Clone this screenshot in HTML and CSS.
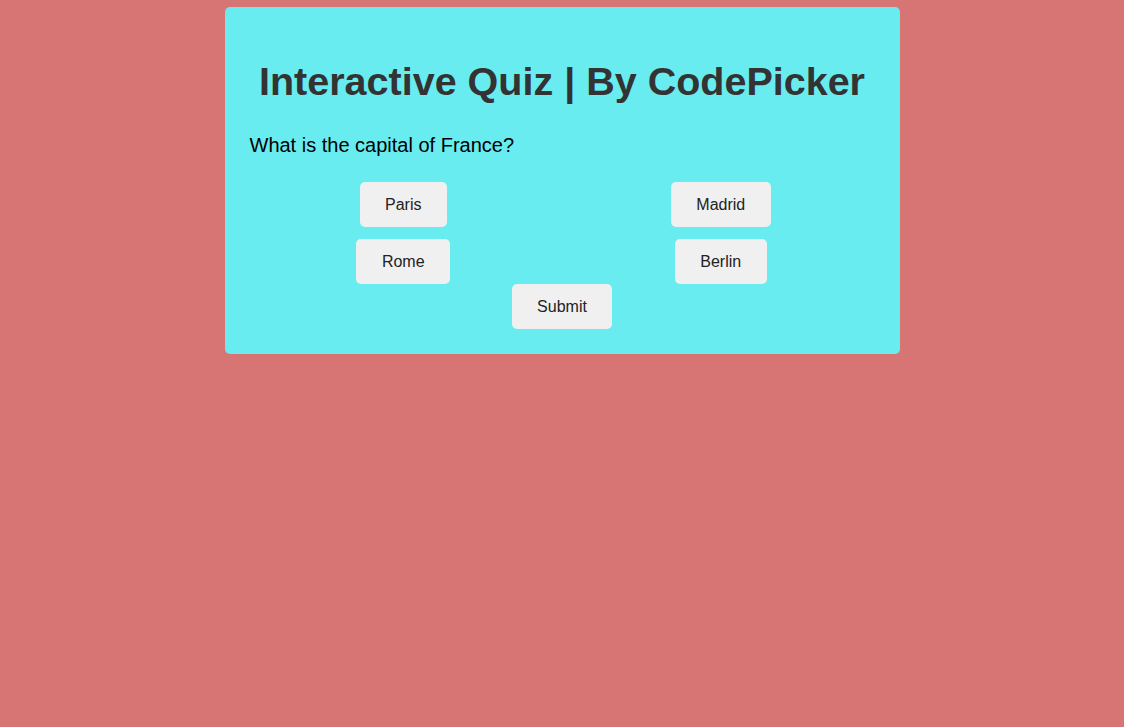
FILE: index.html
```html
<!DOCTYPE html>
<html lang="en">
<head>
<meta charset="utf-8">
<title>Interactive Quiz | By CodePicker</title>
<link rel="stylesheet" href="styles.css">
</head>
<body>
  <div class="quiz">
    <h1 class="title">Interactive Quiz | By CodePicker</h1>
    <p class="question">What is the capital of France?</p>
    <div class="options">
      <button class="btn">Paris</button>
      <button class="btn">Madrid</button>
      <button class="btn">Rome</button>
      <button class="btn">Berlin</button>
    </div>
    <div class="actions">
      <button class="btn">Submit</button>
    </div>
  </div>
</body>
</html>
```

FILE: styles.css
```css
html, body {
  margin: 0;
  padding: 0;
}
body {
  background: #d77575;
  font-family: "Liberation Sans", Arial, sans-serif;
  min-height: 727px;
}
.quiz {
  width: 675px;
  margin: 7px auto 0;
  background: #68ecf0;
  border-radius: 5px;
  padding: 25px;
  box-sizing: border-box;
}
.title {
  font-size: 39.5px;
  font-weight: bold;
  color: #333333;
  text-align: center;
  margin: 27px 0 30px;
}
.question {
  font-size: 20px;
  color: #000;
  margin: 0;
}
.options {
  display: grid;
  grid-template-columns: 1fr 1fr;
  column-gap: 10px;
  row-gap: 12px;
  justify-items: center;
  margin-top: 25px;
}
.actions {
  display: flex;
  justify-content: center;
}
.btn {
  font-family: "Liberation Sans", Arial, sans-serif;
  font-size: 16px;
  color: #222;
  background: #f0f0f0;
  border: none;
  border-radius: 5px;
  padding: 13.5px 25.5px;
  cursor: pointer;
}
```
